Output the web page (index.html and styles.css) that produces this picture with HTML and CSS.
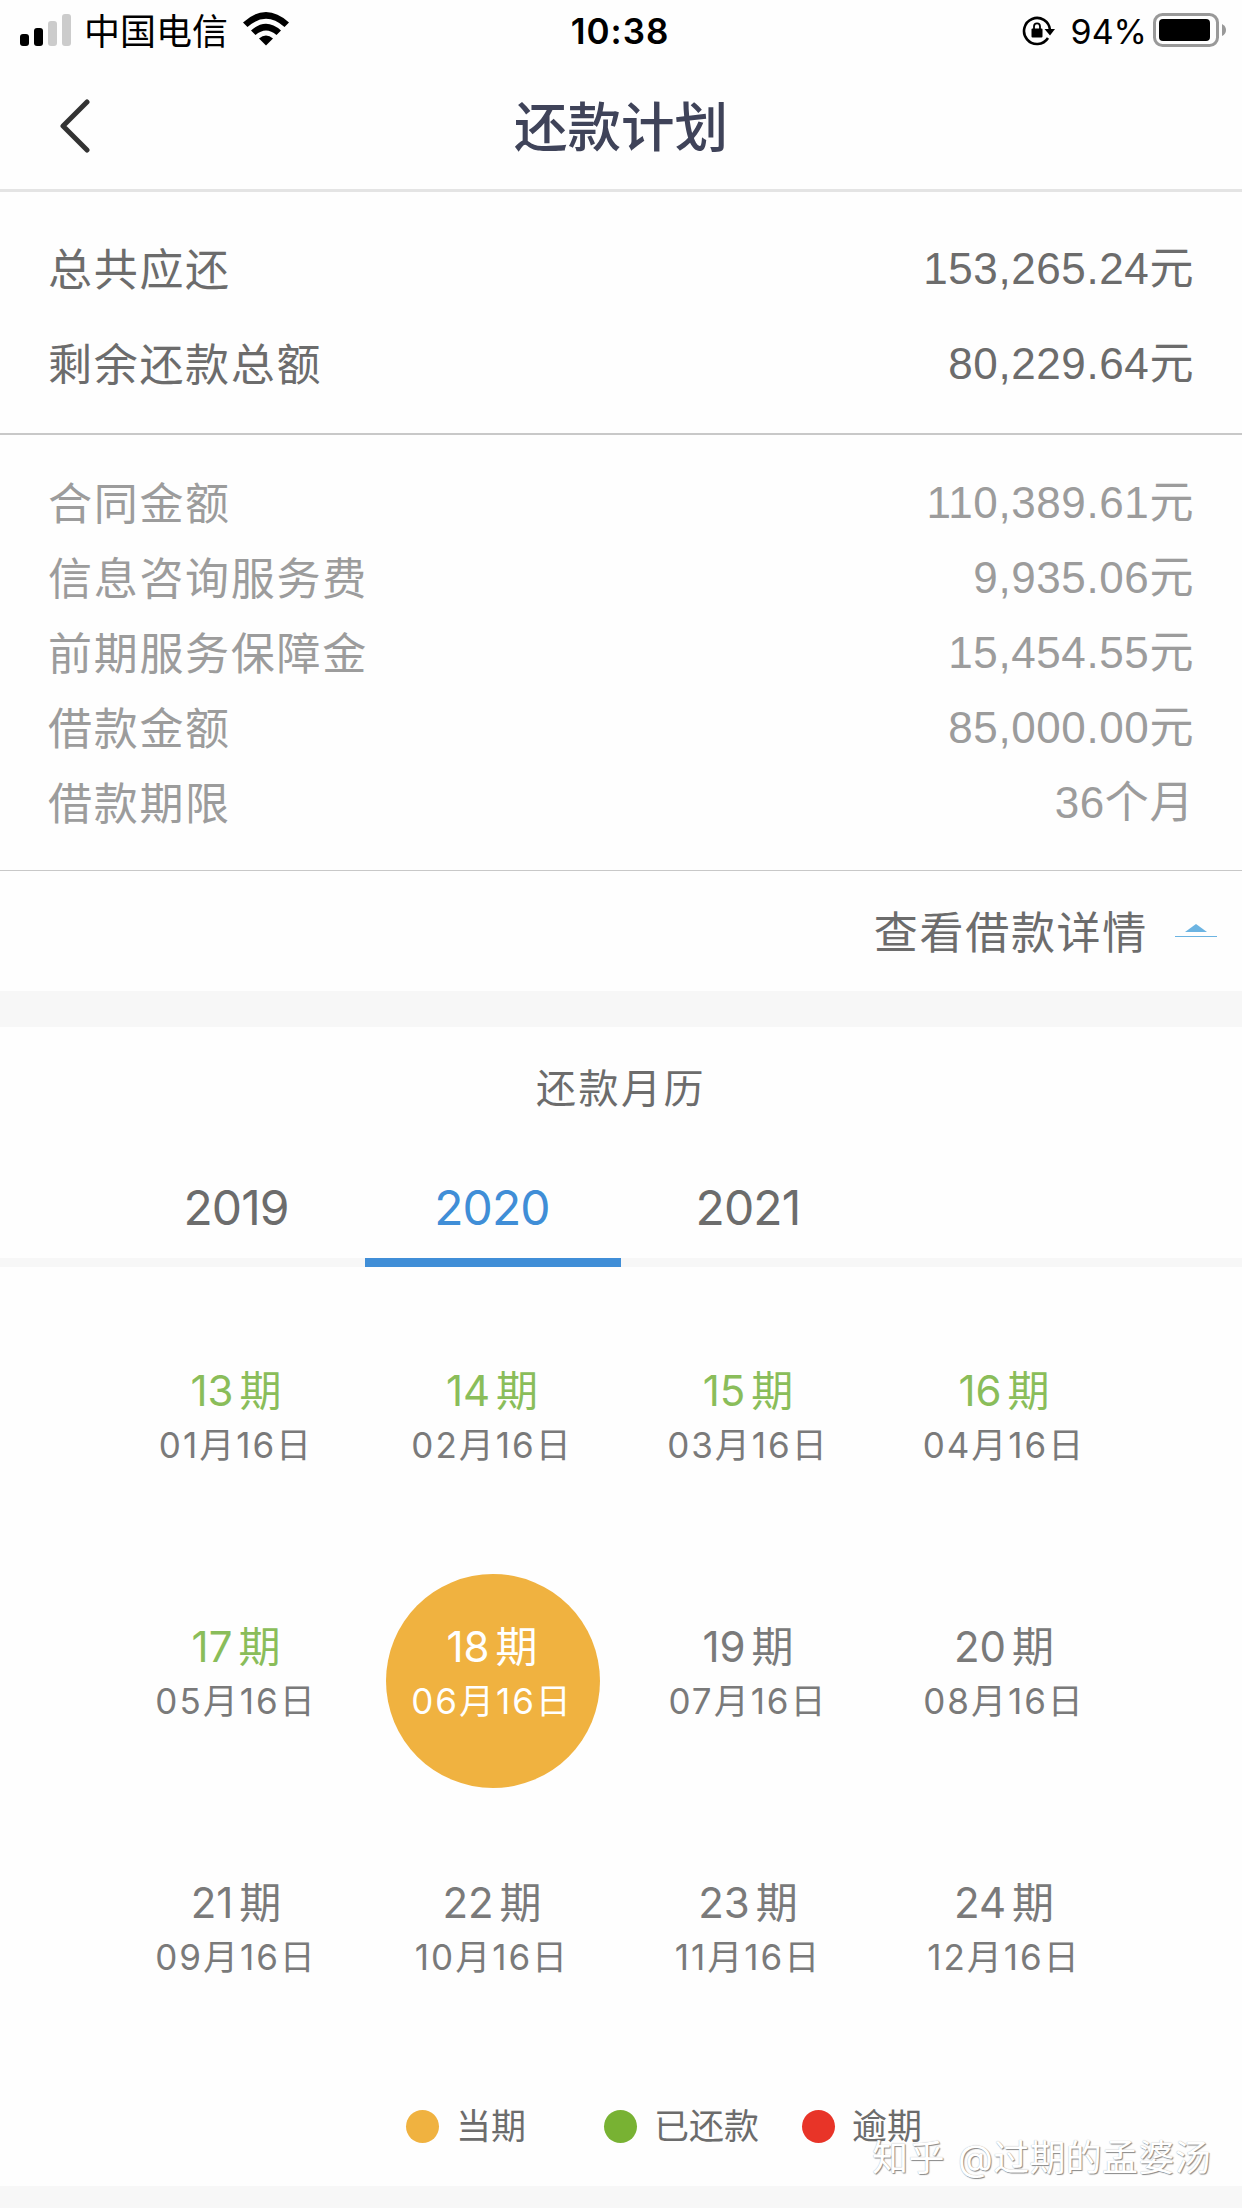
FILE: index.html
```html
<!DOCTYPE html>
<html lang="zh-CN">
<head>
  <meta charset="UTF-8" />
  <title>还款计划</title>
  <meta name="viewport" content="width=device-width, initial-scale=1" />
  <link rel="stylesheet" href="styles.css">
</head>
<body>
  <div class="status-bar">
    <div class="status-left">
      <svg class="signal" width="51" height="32" viewBox="0 0 51 32">
        <rect x="0" y="20" width="9" height="12" rx="3"/>
        <rect x="14" y="14" width="9" height="18" rx="3"/>
        <rect x="28" y="7" width="9" height="25" rx="3" fill="#ccc"/>
        <rect x="42" y="0" width="9" height="32" rx="3" fill="#ccc"/>
      </svg>
      <span class="carrier">中国电信</span>
      <svg class="wifi" width="46" height="34" viewBox="0 0 46 34">
        <path d="M0 10.5Q23-10.500 46 10.500L41.500 15Q23-1.500 4.500 15Z"/>
        <path d="M8 18.500Q23 5 38 18.500L33.500 23Q23 14 12.500 23Z"/>
        <path d="M16 26.500Q23 20.500 30 26.500L23 33.500Z"/>
      </svg>
    </div>
    <span class="clock">10:38</span>
    <div class="status-right">
      <svg class="lock" width="34" height="30" viewBox="0 0 34 30">
        <path d="M26 22A13 13 0 1 1 28 14" fill="none" stroke="#000" stroke-width="2.600"/>
        <path d="M22.500 13H33L28 19.500Z"/>
        <rect x="9.500" y="12.500" width="11" height="9" rx="1"/>
        <path d="M12 13V10.500a3 3.200 0 0 1 6 0V13" fill="none" stroke="#000" stroke-width="1.800"/>
      </svg>
      <span class="percent">94%</span>
      <svg class="battery" width="73" height="34" viewBox="0 0 73 34">
        <rect x="1.500" y="1.500" width="63" height="31" rx="8" fill="none" stroke="#999" stroke-width="3"/>
        <rect x="6" y="6" width="51" height="22" rx="4"/>
        <path d="M69 11Q73 13 73 17T69 23Z" fill="#999"/>
      </svg>
    </div>
  </div>

  <header class="nav">
    <svg class="back" width="30" height="54" viewBox="0 0 30 54">
      <path d="M27 3L3 27L27 51" fill="none" stroke="#333" stroke-width="5" stroke-linecap="round" stroke-linejoin="round"/>
    </svg>
    <h1>还款计划</h1>
  </header>

  <section class="summary">
    <div class="row"><span>总共应还</span><span class="num">153,265.24元</span></div>
    <div class="row"><span>剩余还款总额</span><span class="num">80,229.64元</span></div>
  </section>

  <section class="detail">
    <div class="row"><span>合同金额</span><span class="num">110,389.61元</span></div>
    <div class="row"><span>信息咨询服务费</span><span class="num">9,935.06元</span></div>
    <div class="row"><span>前期服务保障金</span><span class="num">15,454.55元</span></div>
    <div class="row"><span>借款金额</span><span class="num">85,000.00元</span></div>
    <div class="row"><span>借款期限</span><span class="num">36个月</span></div>
  </section>

  <div class="toggle">
    <span>查看借款详情</span>
    <svg width="42" height="14" viewBox="0 0 42 14">
      <path d="M10 8L21 0L32 8Z" fill="#6cb4e2"/>
      <rect x="0" y="12" width="42" height="1" fill="#6cb4e2"/>
    </svg>
  </div>

  <section class="calendar">
    <h2>还款月历</h2>
    <div class="tabs">
      <div class="tab">2019</div>
      <div class="tab active">2020</div>
      <div class="tab">2021</div>
    </div>
    <div class="months">
      <div class="month paid"><b>13<i>期</i></b><span>01月16日</span></div>
      <div class="month paid"><b>14<i>期</i></b><span>02月16日</span></div>
      <div class="month paid"><b>15<i>期</i></b><span>03月16日</span></div>
      <div class="month paid"><b>16<i>期</i></b><span>04月16日</span></div>
      <div class="month paid"><b>17<i>期</i></b><span>05月16日</span></div>
      <div class="month current"><b>18<i>期</i></b><span>06月16日</span></div>
      <div class="month"><b>19<i>期</i></b><span>07月16日</span></div>
      <div class="month"><b>20<i>期</i></b><span>08月16日</span></div>
      <div class="month"><b>21<i>期</i></b><span>09月16日</span></div>
      <div class="month"><b>22<i>期</i></b><span>10月16日</span></div>
      <div class="month"><b>23<i>期</i></b><span>11月16日</span></div>
      <div class="month"><b>24<i>期</i></b><span>12月16日</span></div>
    </div>
    <div class="legend">
      <div class="key"><span class="dot orange"></span>当期</div>
      <div class="key"><span class="dot green"></span>已还款</div>
      <div class="key"><span class="dot red"></span>逾期</div>
    </div>
  </section>

  <div class="watermark">知乎 @过期的孟婆汤</div>
</body>
</html>
```
FILE: styles.css
```css
* {
  box-sizing: border-box;
}
body {
  position: relative;
  margin: 0;
  width: 1242px;
  height: 2208px;
  overflow: hidden;
  background: #f7f7f7;
  color: #6c6c6c;
  font-family: Inter, "Noto Sans CJK SC", sans-serif;
}
h1, h2 {
  margin: 0;
}

/* status bar */
.status-bar {
  display: grid;
  grid-template-columns: 1fr auto 1fr;
  align-items: center;
  height: 62px;
  padding: 0 16px 0 20px;
  background: #fefefe;
  color: #000;
}
.status-left,
.status-right {
  display: flex;
  align-items: center;
}
.status-right {
  justify-content: flex-end;
}
.signal {
  margin: -2px 13px 0 0;
}
.carrier {
  padding-top: 2px;
  font-size: 36px;
  line-height: 60px;
}
.wifi {
  margin: -4px 0 0 15px;
}
.clock {
  margin-left: -6px;
  font-size: 35px;
  font-weight: 600;
  letter-spacing: 1px;
}
.percent {
  margin: 0 6px 0 15px;
  font-size: 34px;
}
.battery {
  margin-top: -2px;
}

/* title bar */
.nav {
  position: relative;
  display: flex;
  align-items: center;
  justify-content: center;
  height: 130px;
  padding-top: 4px;
  border-bottom: 3px solid #e4e4e4;
  background: #fefefe;
}
.back {
  position: absolute;
  left: 60px;
  top: 37px;
}
.nav h1 {
  font-size: 53.5px;
  font-weight: 500;
  line-height: 60px;
  color: #3f4359;
}

/* amounts */
.row {
  display: flex;
  align-items: center;
  justify-content: space-between;
  font-size: 44px;
  letter-spacing: 1.7px;
}
.num {
  padding-bottom: 4px;
  font-family: "Liberation Sans", "Noto Sans CJK SC", sans-serif;
  letter-spacing: 0.6px;
}
.summary {
  height: 243px;
  padding: 27px 48px 0;
  border-bottom: 2px solid #c8c8c8;
  background: #fefefe;
}
.summary .row {
  height: 95px;
}
.detail {
  height: 436px;
  padding: 28px 48px 0;
  border-bottom: 1px solid #c8c8c8;
  background: #fefefe;
  color: #9c9c9c;
}
.detail .row {
  height: 75px;
}
.toggle {
  display: flex;
  align-items: center;
  justify-content: flex-end;
  height: 120px;
  padding-right: 25px;
  background: #fefefe;
  font-size: 44px;
  letter-spacing: 1.7px;
}
.toggle span {
  margin-top: -2px;
}
.toggle svg {
  margin-left: 27px;
}

/* calendar */
.calendar {
  height: 1159px;
  margin-top: 36px;
  background: #fefefe;
}
.calendar h2 {
  padding-top: 33px;
  font-size: 40px;
  font-weight: 400;
  line-height: 57px;
  letter-spacing: 2.5px;
  text-align: center;
}
.tabs {
  display: flex;
  height: 150px;
  padding-left: 109px;
  border-bottom: 9px solid #f7f7f7;
}
.tab {
  width: 256px;
  height: 150px;
  padding: 61px 2px 0 0;
  font-size: 48px;
  line-height: 60px;
  letter-spacing: -0.9px;
  text-align: center;
}
.tab.active {
  border-bottom: 9px solid #408ed7;
  color: #408ed7;
}
.months {
  display: grid;
  grid-template-columns: repeat(4, 256px);
  grid-auto-rows: 256px;
  justify-content: center;
  padding-top: 30px;
}
.month {
  display: flex;
  flex-direction: column;
  align-items: center;
  justify-self: center;
  align-self: center;
  width: 214px;
  height: 214px;
  padding: 46px 2px 0 0;
  border-radius: 50%;
  color: #7a7a7a;
}
.month b {
  font-size: 42px;
  font-weight: 400;
  line-height: 54px;
}
.month i {
  margin-left: 6px;
  font-style: normal;
}
.month span {
  font-size: 35px;
  line-height: 54px;
  letter-spacing: 2px;
  white-space: nowrap;
}
.month.paid b {
  color: #8abd5a;
}
.month.current {
  background: #f0b240;
  color: #fff;
}

.legend {
  display: flex;
  padding: 36px 0 0 406px;
}
.key {
  display: flex;
  align-items: center;
  width: 198px;
  font-size: 35px;
  line-height: 50px;
  white-space: nowrap;
}
.dot {
  width: 33px;
  height: 33px;
  margin-right: 17px;
  border-radius: 50%;
}
.orange {
  background: #f0b240;
}
.green {
  background: #78b233;
}
.red {
  background: #e83428;
}

.watermark {
  position: absolute;
  right: 31px;
  bottom: 23px;
  font-size: 36px;
  line-height: 54px;
  word-spacing: 3px;
  letter-spacing: 0.3px;
  color: #fff;
  text-shadow: 1px 1px 1px #888, 0 0 1px #aaa;
}
```
